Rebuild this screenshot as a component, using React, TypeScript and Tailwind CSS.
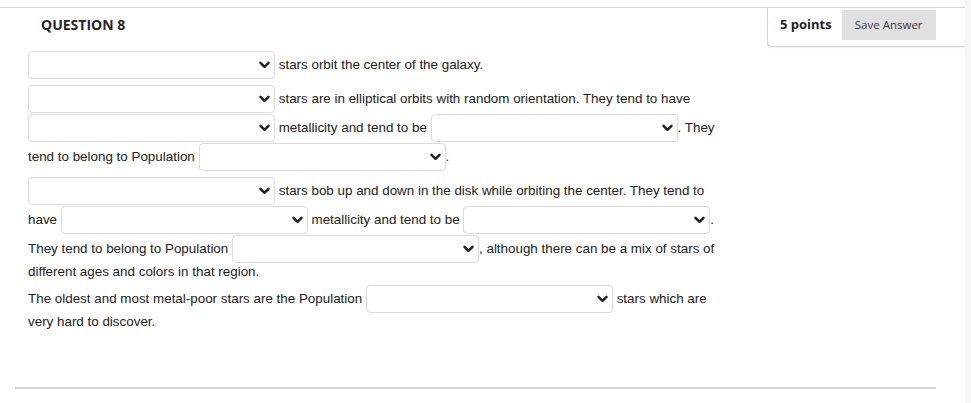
import type { ReactNode } from "react";

function Dropdown() {
  return (
    <span className="relative inline-block align-middle mb-px">
      <select className="block w-[247px] h-[28px] appearance-none rounded-[4px] border border-[#dcdcdc] bg-white outline-none">
        <option value=""></option>
      </select>
      <svg
        className="pointer-events-none absolute right-[5px] top-1/2 -translate-y-1/2"
        width="11"
        height="8"
        viewBox="0 0 11 8"
        fill="none"
      >
        <path d="M1.5 1.8 L5.5 5.8 L9.5 1.8" stroke="#1f1f1f" strokeWidth="2.4" strokeLinecap="round" strokeLinejoin="round" />
      </svg>
    </span>
  );
}

function Para({ children }: { children: ReactNode }) {
  return <p className="mb-[5px] leading-[16px]">{children}</p>;
}

export default function App() {
  return (
    <div className="relative w-[971px] h-[403px] overflow-hidden bg-white">
      <div className="pt-[7px] pr-[6px]">
        <div className="flex border-t border-[#d4d4d4] font-['Open_Sans',sans-serif]">
          <h3 className="pl-[41px] pt-[6px] text-[14px] font-bold text-[#262626]">QUESTION 8</h3>
          <div className="ml-auto flex h-[39px] w-[198px] items-start rounded-bl-[4px] border-b border-l border-[#d4d4d4] pl-[12px] shadow-[0_1px_2px_rgba(0,0,0,0.06)]">
            <span className="mt-[7px] text-[13px] font-bold text-[#1f1f1f]">5 points</span>
            <button className="ml-[10px] mt-[2px] h-[30px] w-[94px] bg-[#e0e0e0] text-[11.5px] text-[#3a3a3a]">
              Save Answer
            </button>
          </div>
        </div>
      </div>

      <div className="mt-[4px] w-[725px] pl-[28px] font-['Liberation_Sans',Arial,sans-serif] text-[13.4px] text-[#222]">
        <Para>
          <Dropdown /> stars orbit the center of the galaxy.
        </Para>
        <Para>
          <Dropdown /> stars are in elliptical orbits with random orientation. They tend to have{" "}
          <Dropdown /> metallicity and tend to be <Dropdown />. They tend to belong to Population{" "}
          <Dropdown />.
        </Para>
        <Para>
          <Dropdown /> stars bob up and down in the disk while orbiting the center. They tend to have{" "}
          <Dropdown /> metallicity and tend to be <Dropdown />. They tend to belong to Population{" "}
          <Dropdown />, although there can be a mix of stars of different ages and colors in that region.
        </Para>
        <Para>
          The oldest and most metal-poor stars are the Population <Dropdown /> stars which are very hard
          to discover.
        </Para>
      </div>

      <div className="absolute left-[15px] top-[387px] h-[2px] w-[921px] bg-[#d6d6d6]" />
      <div className="absolute right-0 top-0 h-full w-[6px] bg-[#f6f6f6]" />
    </div>
  );
}
